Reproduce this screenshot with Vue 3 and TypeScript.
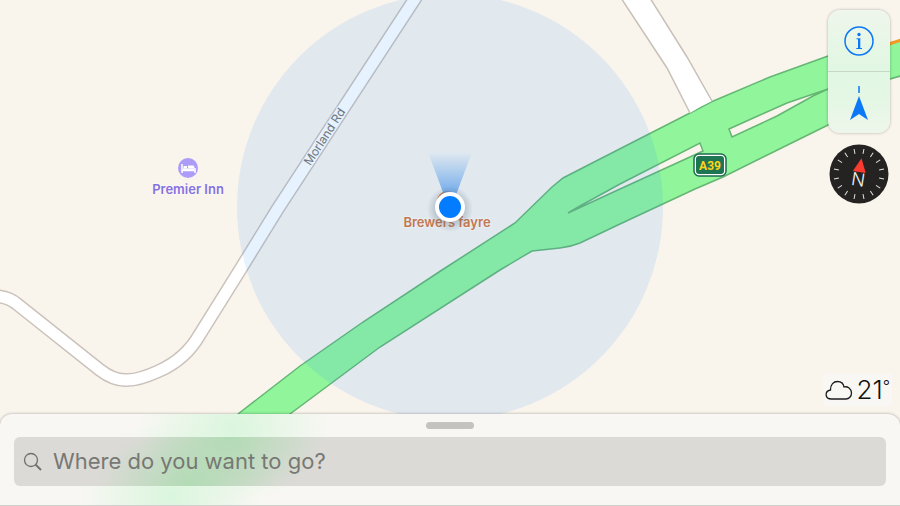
<script setup lang="ts">
import { ref } from 'vue'

const query = ref('')
const ticks = Array.from({ length: 16 }, (_, i) => i * 22.5 + 11.25)
</script>

<template>
  <main class="screen">
    <svg class="map" viewBox="0 0 900 506" preserveAspectRatio="xMidYMid slice" role="img" aria-label="Map">
      <defs>
        <linearGradient id="beam" x1="0" y1="152" x2="0" y2="195" gradientUnits="userSpaceOnUse">
          <stop offset="0" stop-color="#4b96ea" stop-opacity="0" />
          <stop offset="0.4" stop-color="#4b96ea" stop-opacity="0.3" />
          <stop offset="1" stop-color="#4b96ea" stop-opacity="0.75" />
        </linearGradient>
        <radialGradient id="dotShadow">
          <stop offset="0.5" stop-color="#506070" stop-opacity="0.35" />
          <stop offset="1" stop-color="#506070" stop-opacity="0" />
        </radialGradient>
      </defs>

      <g class="lane">
        <path class="lane-casing" d="M-8 296 Q8 296 17 304 L100 370 Q113 380 125 380 Q137 381 159 371 Q186 359 200 334 L240 270 L277 210 L418 -6" />
        <path class="lane-fill" d="M-8 296 Q8 296 17 304 L100 370 Q113 380 125 380 Q137 381 159 371 Q186 359 200 334 L240 270 L277 210 L418 -6" />
      </g>

      <path
        class="trunk"
        fill-rule="evenodd"
        d="M120 518 L238 414 L300 366 L363 322 L442 270 L515 223 L552 187 L563 178 L600 159 L690 113 L711 102 L770 77 L828 56 L904 40 L904 75 L890 79 L828 125 L723 177 L695 189 L620 224 L580 243 Q570 247 560 248 L532 251 L500 270 L380 347 L290 414 L190 518 Z
           M568 213 L580 206 L620 184 L700 143 L703 151 L655 173 L620 189 Z
           M729 129 L732 137 L777 116 L813 96 L828 89 L787 103 L760 115 Z"
      />
      <path class="slip" d="M886 45 L904 39" />
      <path class="side-fill" d="M621 -2 L667 68 L690 113 L700 107 L712 101 L687 57 L650 -2 Z" />
      <path class="side-edge" d="M621 -2 L667 68 L690 113 M650 -2 L687 57 L712 101" />

      <circle class="accuracy" cx="450" cy="207" r="213" />

      <text class="road-name" text-anchor="middle" transform="translate(328 139) rotate(-57)">Morland Rd</text>

      <g class="shield">
        <rect class="shield-rim" x="694" y="154" width="32" height="22" rx="5" />
        <rect class="shield-face" x="696" y="156" width="28" height="18" rx="3" />
        <text x="710" y="170" text-anchor="middle">A39</text>
      </g>

      <g class="hotel">
        <circle cx="188" cy="168" r="10" />
        <path d="M182 164 V173 M182 170.500 H195 M195 168 V173" class="bed-frame" />
        <path d="M183.500 168.500 V166 H187 V168.500 Z M188 165.500 H193 Q194.500 165.500 194.500 168.500 H188 Z" class="bed-top" />
        <path d="M183 169.200 H194" class="bed-frame" />
        <text x="188" y="194" text-anchor="middle">Premier Inn</text>
      </g>

      <g class="pub">
        <circle cx="447" cy="201" r="10" />
        <text x="447" y="227" text-anchor="middle">Brewers fayre</text>
      </g>

      <path fill="url(#beam)" d="M428 152 L444 195 L456 195 L472 152 Z" />
      <circle cx="450" cy="209" r="23" fill="url(#dotShadow)" />
      <circle cx="450" cy="207" r="15" fill="#fff" />
      <circle cx="450" cy="207" r="11" fill="#047cff" />
    </svg>

    <aside class="tools">
      <div class="tool-card">
        <button type="button" aria-label="Information">
          <svg width="30" height="30" viewBox="0 0 30 30">
            <circle cx="15" cy="15" r="14" fill="none" stroke="#0b78f5" stroke-width="1.500" />
            <circle cx="15" cy="8.500" r="1.700" fill="#0b78f5" />
            <path d="M12.500 12.300 H16.300 V22 H18 V23 H12.300 V22 H14 V13.300 H12.500 Z" fill="#0b78f5" />
          </svg>
        </button>
        <button type="button" aria-label="Heading">
          <svg width="20" height="36" viewBox="0 0 20 36">
            <path d="M10 1 V8" stroke="#0b78f5" stroke-width="1.500" />
            <path d="M10 11 L19 35 L10 29 L1 35 Z" fill="#0b78f5" />
          </svg>
        </button>
      </div>
      <button class="compass" type="button" aria-label="Compass, north">
        <svg width="60" height="60" viewBox="-30 -30 60 60">
          <circle r="29.500" fill="#242322" />
          <path v-for="t in ticks" :key="t" d="M0 -25.500 V-20.500" stroke="#e4e4e4" stroke-width="1" :transform="`rotate(${t})`" />
          <g transform="rotate(9)">
            <path d="M0 -16 L6.500 -2 H-6.500 Z" fill="#fb3b30" />
            <text y="12" text-anchor="middle">N</text>
          </g>
        </svg>
      </button>
    </aside>

    <div class="bottom">
      <div class="weather">
        <svg width="28" height="20" viewBox="0 0 28 20">
          <path d="M6.500 19 C-0.500 19 -0.500 11 5.500 10 C5.500 4.500 8.500 1.500 12.500 1.500 C16 1.500 18.500 4 19 7 C22.500 6 26.500 8.500 26.500 13 C26.500 16.500 24 19 21 19 Z" fill="none" stroke="#1c1c1c" stroke-width="1.300" />
        </svg>
        <span class="temp">21<span class="degree">°</span></span>
      </div>
      <section class="sheet">
        <span class="grabber"></span>
        <label class="search">
          <svg width="20" height="20" viewBox="0 0 20 20">
            <circle cx="8" cy="8" r="6.500" fill="none" stroke="#6f6f6c" stroke-width="1.300" />
            <path d="M12.500 12.500 L18 18" stroke="#6f6f6c" stroke-width="1.800" />
          </svg>
          <input v-model="query" type="text" aria-label="Destination" placeholder="Where do you want to go?" />
        </label>
      </section>
    </div>
  </main>
</template>

<style>
body {
  margin: 0;
}
</style>

<style scoped>
.screen {
  position: relative;
  display: flex;
  flex-direction: column;
  justify-content: space-between;
  min-height: 100vh;
  overflow: hidden;
  background: #f9f5ed;
  font-family: Inter, "Liberation Sans", sans-serif;
}
.map {
  position: absolute;
  inset: 0;
  width: 100%;
  height: 100%;
}
.lane-casing {
  fill: none;
  stroke: #cbc2bb;
  stroke-width: 14;
}
.lane-fill {
  fill: none;
  stroke: #fff;
  stroke-width: 11;
}
.trunk {
  fill: #90f59b;
  stroke: #65b573;
  stroke-width: 1.5;
}
.slip {
  stroke: #f39a22;
  stroke-width: 3;
}
.side-fill {
  fill: #fff;
}
.side-edge {
  fill: none;
  stroke: #c9c0b8;
  stroke-width: 1.5;
}
.accuracy {
  fill: rgba(40, 137, 255, 0.11);
}
.road-name {
  font-size: 12px;
  fill: #6d7984;
  stroke: #e8f1f9;
  stroke-width: 2px;
  paint-order: stroke;
}
.shield-rim {
  fill: #fff;
  stroke: #1e6b50;
  stroke-width: 1.5;
}
.shield-face {
  fill: #1d7651;
}
.shield text {
  font: bold 12px Roboto, sans-serif;
  fill: #ffd21c;
}
.hotel circle {
  fill: #ac9cf8;
}
.bed-frame {
  fill: none;
  stroke: #fff;
  stroke-width: 1.5;
}
.bed-top {
  fill: #fff;
}
.hotel text,
.pub text {
  font-size: 13px;
  font-weight: 600;
  stroke: #fbf8f2;
  stroke-width: 2px;
  paint-order: stroke;
}
.hotel text {
  fill: #8672e0;
}
.pub circle {
  fill: #c8835f;
}
.pub text {
  fill: #c37850;
  stroke: #e8eef3;
}
.tools {
  position: relative;
  align-self: flex-end;
  display: flex;
  flex-direction: column;
  align-items: center;
  gap: 11px;
  padding: 10px;
}
.tool-card {
  width: 62px;
  border-radius: 12px;
  background: linear-gradient(#eff6ec, #e2f7e3 45%, #e3f7e4 70%, #eef6eb);
  box-shadow: 0 0 3px rgba(0, 0, 0, 0.3);
}
.tool-card button {
  display: grid;
  place-items: center;
  width: 100%;
  height: 61px;
  padding: 0;
  border: 0;
  background: none;
}
.tool-card button + button {
  height: 62px;
  border-top: 1px solid #c8d6c8;
}
.compass {
  display: block;
  padding: 0;
  border: 0;
  border-radius: 50%;
  background: none;
}
.compass svg {
  display: block;
}
.compass text {
  font: 300 18px Inter, sans-serif;
  fill: #f2f2f2;
}
.bottom {
  position: relative;
  display: flex;
  flex-direction: column;
  gap: 8px;
}
.weather {
  align-self: flex-end;
  display: flex;
  align-items: center;
  gap: 4px;
  margin-right: 8px;
  padding: 0 2px;
  border-radius: 4px;
  background: rgba(248, 248, 247, 0.7);
}
.temp {
  display: flex;
  font-size: 26px;
  font-weight: 300;
  line-height: 32px;
  color: #111;
}
.degree {
  font-size: 16px;
  line-height: 24px;
}
.sheet {
  display: flex;
  flex-direction: column;
  align-items: center;
  gap: 8px;
  padding: 8px 14px 19px;
  border-bottom: 1px solid #cfcfcb;
  border-radius: 12px 12px 0 0;
  background:
    radial-gradient(ellipse 95px 75px at 26% 15%, rgba(215, 246, 219, 0.9), rgba(215, 246, 219, 0)),
    radial-gradient(ellipse 90px 75px at 19% 90%, rgba(215, 246, 219, 0.9), rgba(215, 246, 219, 0)),
    #f8f7f3;
  box-shadow: 0 0 3px rgba(0, 0, 0, 0.35);
}
.grabber {
  width: 48px;
  height: 7px;
  border-radius: 4px;
  background: #c4c3bf;
}
.search {
  display: flex;
  align-items: center;
  gap: 10px;
  box-sizing: border-box;
  width: 100%;
  height: 49px;
  padding: 0 9px;
  border-radius: 6px;
  background:
    radial-gradient(ellipse 90px 60px at 25% 0%, rgba(165, 220, 170, 0.75), rgba(165, 220, 170, 0)),
    radial-gradient(ellipse 90px 60px at 20% 100%, rgba(165, 220, 170, 0.75), rgba(165, 220, 170, 0)),
    #dbdad6;
}
.search input {
  flex: 1;
  min-width: 0;
  padding: 0 0 2px;
  border: 0;
  outline: 0;
  background: none;
  font: 22px Inter, sans-serif;
  color: #333;
}
.search input::placeholder {
  color: #777874;
  opacity: 1;
}
</style>
